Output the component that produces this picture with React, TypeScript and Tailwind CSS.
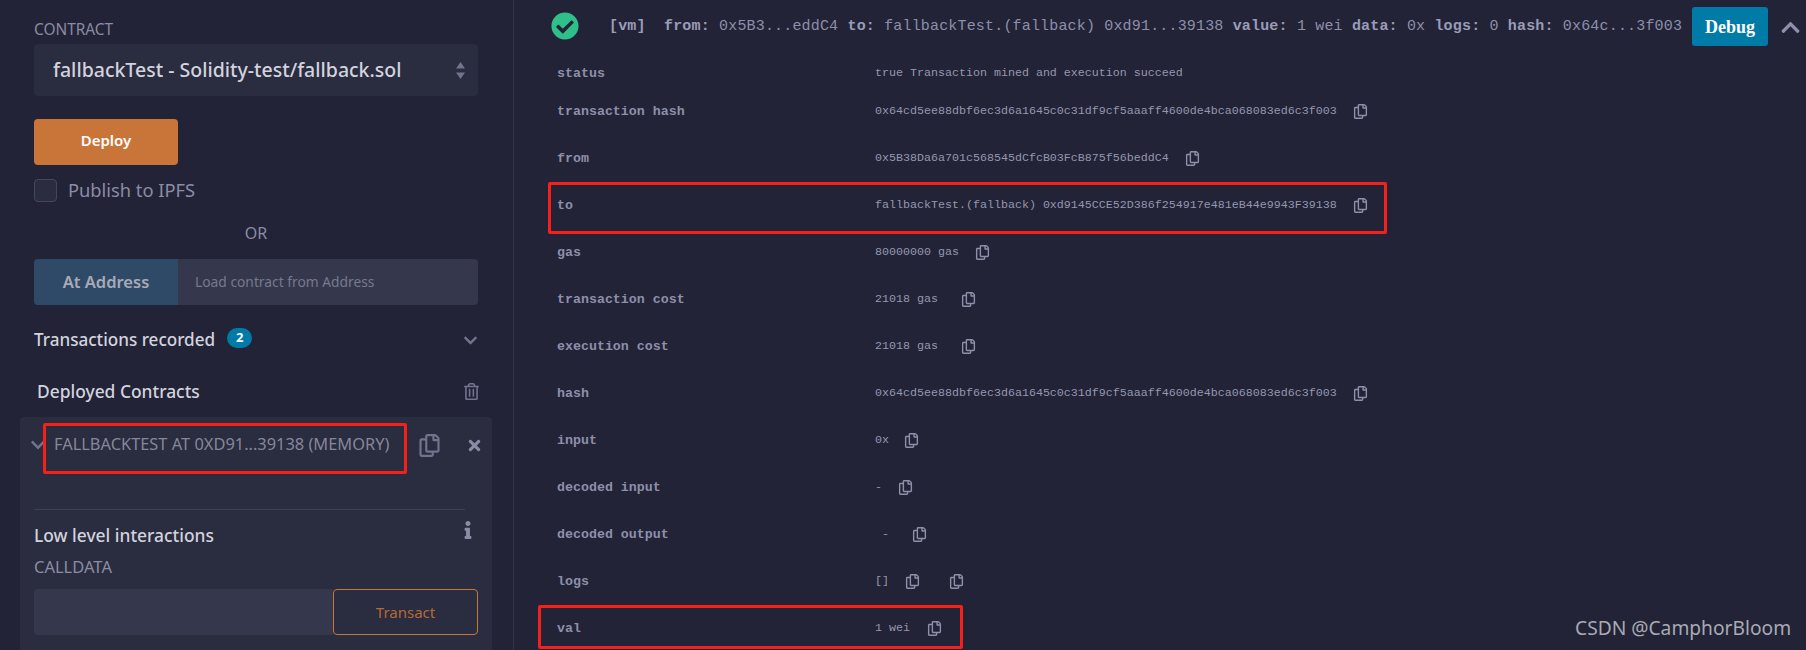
import React from 'react';
import { FaRegCopy, FaChevronDown, FaChevronUp, FaRegTrashAlt, FaTimes, FaInfo, FaCheckCircle } from 'react-icons/fa';

const rows = [
  { key: 'status', value: 'true Transaction mined and execution succeed', height: 'h-[28px]', gap: '', copy: 0 },
  { key: 'transaction hash', value: '0x64cd5ee88dbf6ec3d6a1645c0c31df9cf5aaaff4600de4bca068083ed6c3f003', height: 'h-[47px]', gap: 'ml-[16px]', copy: 1 },
  { key: 'from', value: '0x5B38Da6a701c568545dCfcB03FcB875f56beddC4', height: 'h-[47px]', gap: 'ml-[16px]', copy: 1 },
  { key: 'to', value: 'fallbackTest.(fallback) 0xd9145CCE52D386f254917e481eB44e9943F39138', height: 'h-[47px]', gap: 'ml-[16px]', copy: 1 },
  { key: 'gas', value: '80000000 gas', height: 'h-[47px]', gap: 'ml-[16px]', copy: 1 },
  { key: 'transaction cost', value: '21018 gas', height: 'h-[47px]', gap: 'ml-[23px]', copy: 1 },
  { key: 'execution cost', value: '21018 gas', height: 'h-[47px]', gap: 'ml-[23px]', copy: 1 },
  { key: 'hash', value: '0x64cd5ee88dbf6ec3d6a1645c0c31df9cf5aaaff4600de4bca068083ed6c3f003', height: 'h-[47px]', gap: 'ml-[16px]', copy: 1 },
  { key: 'input', value: '0x', height: 'h-[47px]', gap: 'ml-[15px]', copy: 1 },
  { key: 'decoded input', value: '-', height: 'h-[47px]', gap: 'ml-[16px]', copy: 1 },
  { key: 'decoded output', value: ' -', height: 'h-[47px]', gap: 'ml-[23px]', copy: 1 },
  { key: 'logs', value: '[]', height: 'h-[47px]', gap: 'ml-[16px]', copy: 2 },
  { key: 'val', value: '1 wei', height: 'h-[47px]', gap: 'ml-[17px]', copy: 1 },
];

const Bold = ({ children }: { children: React.ReactNode }) => (
  <span className="font-bold text-[#9a9cb8]">{children} </span>
);

const App: React.FC = () => {
  return (
    <div className="relative flex h-[650px] w-[1806px] overflow-hidden bg-[#222336] text-[#8d8fab]">
      {/* Left: deploy panel */}
      <div className="h-full w-[514px] shrink-0 border-r border-[#33354a] pl-[34px] pr-[35px] pt-[17px] font-['Noto_Sans',sans-serif]">
        <div className="h-[27px] text-[15.400px] leading-[26px] text-[#8a8ca3]">CONTRACT</div>

        <div className="flex h-[52px] items-center justify-between rounded-[4px] bg-[#2a2c3f] pl-[19px] pr-[13px]">
          <span className="text-[19.500px] font-medium text-[#d2d3de]">fallbackTest - Solidity-test/fallback.sol</span>
          <svg width="9" height="17" viewBox="0 0 9 17" className="text-[#71738f]" fill="currentColor">
            <path d="M4.5 0 9 6.500H0zM4.500 17 0 10.500h9z" />
          </svg>
        </div>

        <button className="mt-[23px] flex h-[46px] w-[144px] items-center justify-center rounded-[4px] bg-[#c97539] pb-[3px] text-[15px] font-semibold text-white">
          Deploy
        </button>

        <div className="mt-[14px] flex h-[23px] items-center gap-3">
          <span className="h-[23px] w-[23px] rounded-[4px] border border-[#44465e] bg-[#2a2c3f]" />
          <span className="-ml-[1px] -mt-[2px] text-[18.300px] text-[#8a8ca6]">Publish to IPFS</span>
        </div>

        <div className="mt-[19px] h-[24px] text-center text-[16px] leading-[24px] text-[#8a8ca6]">OR</div>

        <div className="mt-[14px] flex h-[46px] overflow-hidden rounded-[4px]">
          <div className="flex w-[144px] items-center justify-center bg-[#2f4a66] text-[16.500px] font-semibold text-[#a8aab8]">
            At Address
          </div>
          <div className="flex flex-1 items-center bg-[#35374c] pl-[17px] text-[13.800px] text-[#77798f]">
            Load contract from Address
          </div>
        </div>

        <div className="mt-[23px] flex h-[24px] items-center justify-between">
          <div className="flex items-center">
            <span className="text-[17.100px] font-medium text-[#d2d3de]">Transactions recorded</span>
            <span className="ml-3 -mt-[4px] flex h-[20px] w-[25px] items-center justify-center rounded-full bg-[#007aa6] text-[13px] font-bold text-white">2</span>
          </div>
          <FaChevronDown className="text-[15px] text-[#71738f]" />
        </div>

        <div className="mt-[27px] flex h-[24px] items-center justify-between pl-[3px]">
          <span className="text-[17.400px] font-medium text-[#d2d3de]">Deployed Contracts</span>
          <FaRegTrashAlt className="-mr-[2px] text-[17px] text-[#71738f]" />
        </div>

        {/* Deployed instance */}
        <div className="-mx-[14px] mt-[14px] h-[240px] rounded-t-[4px] bg-[#2a2c3f] px-[14px]">
          <div className="flex h-[56px] items-center">
            <FaChevronDown className="-ml-1 mr-[8px] shrink-0 text-[16px] text-[#71738f]" />
            <span className="-mt-[2px] whitespace-nowrap text-[16.400px] text-[#85879a]">FALLBACKTEST AT 0XD91...39138 (MEMORY)</span>
            <FaRegCopy className="ml-auto mr-[25px] text-[23px] text-[#71738f]" />
            <FaTimes className="-mr-[5px] text-[17px] text-[#8a8ca6]" />
          </div>
          <div className="mt-[36px] mr-[13px] border-t border-[#3d3f55]" />
          <div className="mt-[13px] flex h-[24px] items-center justify-between">
            <span className="text-[17.400px] font-medium text-[#d2d3de]">Low level interactions</span>
            <FaInfo className="mb-[10px] mr-[1px] text-[18px] text-[#8a8ca6]" />
          </div>
          <div className="mt-[10px] h-[21px] text-[16.500px] leading-[20px] text-[#8a8ca3]">CALLDATA</div>
          <div className="mt-[11px] flex h-[46px]">
            <div className="w-[299px] rounded-l-[4px] bg-[#35374c]" />
            <button className="flex-1 rounded-[4px] border border-[#c97539] text-[15px] text-[#b56a35]">Transact</button>
          </div>
        </div>
      </div>

      {/* Right: terminal */}
      <div className="min-w-0 flex-1 font-['Liberation_Mono',monospace]">
        <div className="flex h-[60px] items-start pl-[37px]">
          <FaCheckCircle className="mt-[12px] shrink-0 text-[28px] text-[#2fbf8a]" />
          <div className="mt-[17px] ml-[30px] whitespace-pre text-[15px] leading-[20px] tracking-[0.170px]">
            <Bold>[vm]</Bold> <Bold>from:</Bold>0x5B3...eddC4 <Bold>to:</Bold>fallbackTest.(fallback) 0xd91...39138 <Bold>value:</Bold>1 wei <Bold>data:</Bold>0x <Bold>logs:</Bold>0 <Bold>hash:</Bold>0x64c...3f003
          </div>
          <div className="ml-auto mr-[5px] mt-[17px] flex items-start">
            <FaChevronUp className="text-[21px] text-[#8d8fab]" />
          </div>
        </div>

        <div className="pl-[43px]">
          {rows.map((row) => (
            <div key={row.key} className={`flex items-center ${row.height}`}>
              <span className="w-[318px] shrink-0 text-[13.300px] font-bold text-[#8d8fab]">{row.key}</span>
              <span className="whitespace-pre text-[11.670px] text-[#9597b0]">{row.value}</span>
              {row.copy > 0 && <FaRegCopy className={`${row.gap} shrink-0 text-[15px] text-[#8d8fab]`} />}
              {row.copy > 1 && <FaRegCopy className="ml-[29px] shrink-0 text-[15px] text-[#8d8fab]" />}
            </div>
          ))}
        </div>
      </div>

      {/* Debug button over the terminal header */}
      <button className="absolute left-[1692px] top-[7px] flex h-[39px] w-[76px] items-center justify-center rounded-[3px] bg-[#007aa6] pt-[2px] font-['Liberation_Serif',serif] text-[18px] font-bold text-white">
        Debug
      </button>

      {/* Red annotation boxes drawn on the screenshot */}
      <div className="absolute left-[43px] top-[423px] h-[51px] w-[364px] rounded-[2px] border-[3px] border-[#f5201a]" />
      <div className="absolute left-[548px] top-[182px] h-[52px] w-[839px] rounded-[2px] border-[3px] border-[#f5201a]" />
      <div className="absolute left-[538px] top-[605px] h-[44px] w-[425px] rounded-[2px] border-[3px] border-[#f5201a]" />

      {/* Watermark */}
      <div className="absolute left-[1575px] top-[614px] font-['Noto_Sans',sans-serif] text-[19.200px] text-[#a9aab3]">
        CSDN @CamphorBloom
      </div>
    </div>
  );
};

export default App;
